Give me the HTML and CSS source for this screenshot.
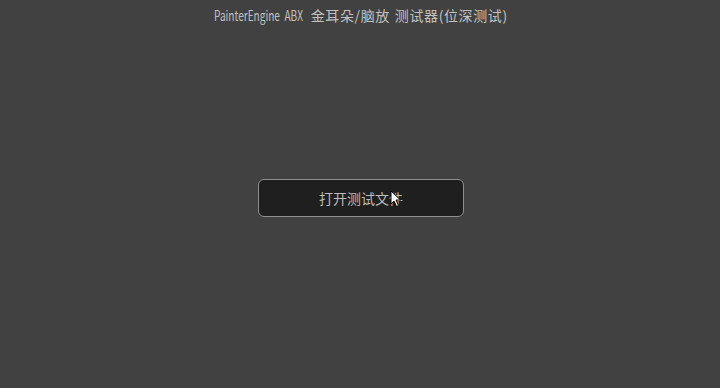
FILE: index.html
```html
<!DOCTYPE html>
<html>
<head>
<meta charset="utf-8">
<link rel="stylesheet" href="styles.css">
</head>
<body>
<div class="app">
  <div class="title"><span class="latin">PainterEngine&nbsp; ABX</span><span class="cjk">金耳朵/脑放</span><span class="cjk gap">测试器(位深测试)</span></div>
  <div class="stage">
    <div class="btn">打开测试文件
      <svg class="cursor" width="12" height="18" viewBox="0 0 12 18"><path d="M1 1 L1 14 L4 11 L6.5 16.5 L8.5 15.5 L6 10 L10.5 10 Z" fill="#fff" stroke="#000" stroke-width="1"/></svg>
    </div>
  </div>
</div>
</body>
</html>
```
FILE: styles.css
```css
html, body { margin: 0; padding: 0; }
body { background: #414141; width: 720px; height: 388px; overflow: hidden; }
.app { display: flex; flex-direction: column; align-items: center; height: 388px; }
.title {
  height: 30px; display: flex; align-items: center; margin-left: 2px;
  font-family: "Noto Sans CJK SC", sans-serif;
  font-size: 14px; color: #c0c0c0; white-space: nowrap;
}
.latin {
  display: inline-block; transform: scaleX(0.72); transform-origin: left center;
  margin-right: -34px;
}
.cjk { margin-left: 7px; letter-spacing: 0.6px; }
.cjk.gap { margin-left: 5px; }
.stage { display: flex; justify-content: center; padding-top: 149px; }
.btn {
  position: relative; box-sizing: border-box;
  width: 206px; height: 38px; margin-left: 2px;
  background: #1f1f1f; border: 1.5px solid #8e8e8e; border-radius: 6px;
  display: flex; align-items: center; justify-content: center;
  font-family: "Noto Sans CJK SC", sans-serif; font-size: 14px; color: #bcbcbc;
}
.cursor { position: absolute; left: 131px; top: 10px; }
```
